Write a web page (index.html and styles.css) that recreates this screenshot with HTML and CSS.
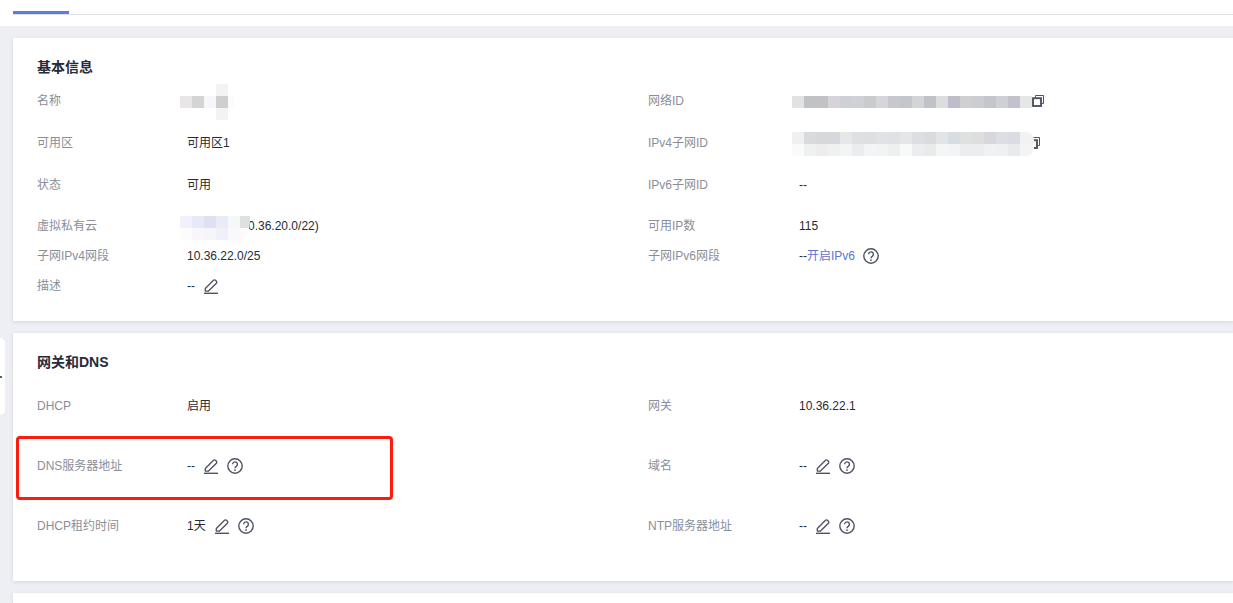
FILE: index.html
```html
<!DOCTYPE html>
<html lang="zh-CN">
<head>
<meta charset="utf-8">
<title>子网详情</title>
<link rel="stylesheet" href="styles.css">
</head>
<body>
<svg class="sprite" aria-hidden="true">
  <symbol id="i-edit" viewBox="0 0 14 15">
    <path d="M1.3 12V9.4L9.5 1.3a1.4 1.4 0 0 1 2 0l.9.9a1.4 1.4 0 0 1 0 2L4.2 12.2z" fill="none" stroke="currentColor" stroke-width="1.35" stroke-linejoin="round"/>
    <path d="M0 14.3h14" stroke="currentColor" stroke-width="1.4"/>
  </symbol>
  <symbol id="i-help" viewBox="0 0 16 16">
    <circle cx="8" cy="8" r="7.2" fill="none" stroke="currentColor" stroke-width="1.4"/>
    <path d="M5.6 6.3a2.4 2.4 0 1 1 3.7 2c-.9.5-1.3 1-1.3 1.9" fill="none" stroke="currentColor" stroke-width="1.4"/>
    <circle cx="8" cy="12.1" r=".9" fill="currentColor"/>
  </symbol>
  <symbol id="i-copy" viewBox="0 0 12 12">
    <path d="M3.5 2.5V.5h8v8H9" fill="none" stroke="currentColor" stroke-width="1"/>
    <rect x="1" y="3.2" width="8" height="7.8" fill="none" stroke="currentColor" stroke-width="1.9"/>
  </symbol>
</svg>

<header class="tabs"><div class="tab-active"></div></header>

<main class="page">
  <section class="card card-basic">
    <h2 class="card-title">基本信息</h2>
    <div class="info first-basic">
      <span class="label">名称</span>
      <div class="value"><span class="mosaic m-name"></span></div>
      <span class="label">网络ID</span>
      <div class="value"><span class="mosaic m-net"></span><svg class="icon-copy"><use href="#i-copy"/></svg></div>
    </div>
    <div class="info gap-lg">
      <span class="label">可用区</span>
      <div class="value">可用区1</div>
      <span class="label">IPv4子网ID</span>
      <div class="value"><span class="mosaic m-subnet"></span><svg class="icon-copy under"><use href="#i-copy"/></svg></div>
    </div>
    <div class="info gap-lg">
      <span class="label">状态</span>
      <div class="value">可用</div>
      <span class="label">IPv6子网ID</span>
      <div class="value">--</div>
    </div>
    <div class="info gap-md">
      <span class="label">虚拟私有云</span>
      <div class="value"><span class="mosaic m-vpc"></span>0.36.20.0/22)</div>
      <span class="label">可用IP数</span>
      <div class="value">115</div>
    </div>
    <div class="info gap-sm">
      <span class="label">子网IPv4网段</span>
      <div class="value">10.36.22.0/25</div>
      <span class="label">子网IPv6网段</span>
      <div class="value">--<a class="link" href="#">开启IPv6</a><svg class="icon-help after-link"><use href="#i-help"/></svg></div>
    </div>
    <div class="info gap-sm">
      <span class="label">描述</span>
      <div class="value">--<svg class="icon-edit"><use href="#i-edit"/></svg></div>
    </div>
  </section>

  <section class="card card-dns">
    <h2 class="card-title">网关和DNS</h2>
    <div class="info first-dns">
      <span class="label">DHCP</span>
      <div class="value">启用</div>
      <span class="label">网关</span>
      <div class="value">10.36.22.1</div>
    </div>
    <div class="info gap-xl">
      <span class="label">DNS服务器地址</span>
      <div class="value">--<svg class="icon-edit"><use href="#i-edit"/></svg><svg class="icon-help"><use href="#i-help"/></svg></div>
      <span class="label">域名</span>
      <div class="value">--<svg class="icon-edit"><use href="#i-edit"/></svg><svg class="icon-help"><use href="#i-help"/></svg></div>
    </div>
    <div class="info gap-xl">
      <span class="label">DHCP租约时间</span>
      <div class="value">1天<svg class="icon-edit"><use href="#i-edit"/></svg><svg class="icon-help"><use href="#i-help"/></svg></div>
      <span class="label">NTP服务器地址</span>
      <div class="value">--<svg class="icon-edit"><use href="#i-edit"/></svg><svg class="icon-help"><use href="#i-help"/></svg></div>
    </div>
    <div class="highlight"></div>
  </section>

  <section class="card card-next"></section>
</main>

<div class="side-handle"><span class="side-tick"></span></div>
</body>
</html>
```

FILE: styles.css
```css
* { box-sizing: border-box; }

html, body {
  margin: 0;
  height: 603px;
  overflow: hidden;
}

body {
  position: relative;
  background: #fff;
  color: #252b3a;
  font: 12px/20px "Liberation Sans", "Noto Sans CJK SC", sans-serif;
}

.sprite { display: none; }

.tabs {
  height: 26px;
  padding-left: 13px;
}

.tabs::before {
  content: "";
  display: block;
  height: 14px;
  border-bottom: 1px solid #dfe1e6;
}

.tab-active {
  width: 56px;
  height: 3px;
  margin-top: -4px;
  background: #5e7ce0;
}

.page {
  display: flex;
  flex-direction: column;
  gap: 12px;
  height: 577px;
  padding: 12px 0 0 13px;
  background: #eeeff4;
  overflow: hidden;
}

.card {
  position: relative;
  flex: none;
  padding: 19px 0 0 24px;
  background: #fff;
  box-shadow: 0 1px 4px rgba(37, 43, 58, .12);
}

.card-basic { height: 283px; }
.card-dns { height: 248px; }
.card-next { height: 40px; }

.card-title {
  margin: 0;
  font-size: 14px;
  line-height: 20px;
  font-weight: 700;
  color: #252b3a;
}

.info {
  display: grid;
  grid-template-columns: 150px 461px 151px 1fr;
  align-items: center;
  height: 20px;
}

.first-basic { margin-top: 14px; }
.first-dns { margin-top: 24px; }
.gap-xl { margin-top: 40px; }
.gap-lg { margin-top: 22px; }
.gap-md { margin-top: 21px; }
.gap-sm { margin-top: 10px; }

.label { color: #8a8e99; }

.value {
  display: flex;
  align-items: center;
  height: 20px;
  color: #252b3a;
}

.link {
  color: #5a75d6;
  text-decoration: none;
}

.icon-edit {
  flex: none;
  width: 14px;
  height: 15px;
  margin-left: 9px;
  color: #4e5363;
}

.icon-help {
  flex: none;
  width: 16px;
  height: 16px;
  margin-left: 9px;
  color: #4e5363;
}

.after-link { margin-left: 8px; }

.icon-copy {
  flex: none;
  width: 12px;
  height: 12px;
  color: #4e5363;
}

.icon-copy.under { margin-left: -6px; }

.mosaic {
  flex: none;
  display: block;
  position: relative;
  z-index: 1;
  background-repeat: no-repeat;
}

.m-name {
  width: 54px;
  height: 36px;
  margin: 2px 0 0 -7px;
  border-radius: 0 0 6px 0;
  background-image:
    linear-gradient(90deg, transparent 0 36px, #f2f3f3 36px 48px, transparent 48px),
    linear-gradient(90deg, #e8e6e6 0 12px, #d4d4d4 12px 24px, #f5f7fb 24px 36px, #cfcfcf 36px 48px, #fafbfd 48px 54px),
    linear-gradient(90deg, transparent 0 36px, #f2f3f3 36px 48px, transparent 48px);
  background-size: 54px 12px;
  background-position: 0 0, 0 12px, 0 24px;
}

.m-net {
  width: 240px;
  height: 12px;
  margin: 2px 0 0 -7px;
  background-image: linear-gradient(90deg,
    #e1e2e2 0 12px, #c1c2c3 12px 24px, #c0c2c5 24px 36px, #d6d4d8 36px 48px,
    #cfd0d5 48px 60px, #d0d1d4 60px 72px, #c9cbcd 72px 84px, #d6d6da 84px 96px,
    #c6c8cd 96px 108px, #c3c6cb 108px 120px, #d3d4d5 120px 132px, #c0c2ca 132px 144px,
    #dcdedd 144px 156px, #bfbdc8 156px 168px, #cfcfd1 168px 180px, #cbcdd2 180px 192px,
    #c5c6cb 192px 204px, #cfd0d4 204px 216px, #c3c1cb 216px 228px, #e6e6e5 228px 240px);
}

.m-subnet {
  width: 242px;
  height: 24px;
  margin: 2px 0 0 -7px;
  border-radius: 0 8px 8px 0;
  background-color: #f5f5f5;
  background-image:
    linear-gradient(90deg,
      #f0f0f2 0 12px, #d9dadc 12px 24px, #d6d8da 24px 36px, #d5d9dd 36px 48px,
      #e6e7e9 48px 60px, #dfe0e2 60px 72px, #dddfe1 72px 84px, #dfe3e6 84px 96px,
      #dfe1e4 96px 108px, #e4e6e8 108px 120px, #dcdee1 120px 132px, #d9dbdf 132px 144px,
      #e3e4e6 144px 156px, #d7dde1 156px 168px, #dee0e2 168px 180px, #dededd 180px 192px,
      #d7d8de 192px 204px, #dcdee2 204px 216px, #d9dce0 216px 228px, #f2f2f3 228px 242px),
    linear-gradient(90deg,
      #fafafa 0 12px, #eff0f0 12px 24px, #ededee 24px 36px, #eff0f1 36px 48px,
      #f3f4f4 48px 60px, #ebeced 60px 72px, #f3f4f5 72px 84px, #f2f3f4 84px 96px,
      #eeefef 96px 108px, #f8f9f9 108px 120px, #ecedef 120px 132px, #e9eaec 132px 144px,
      #f4f5f5 144px 156px, #f3f4f5 156px 168px, #ecedee 168px 180px, #ecedee 180px 192px,
      #f0f1f2 192px 204px, #eff0f1 204px 216px, #e9eaec 216px 228px, #f4f4f4 228px 242px);
  background-size: 242px 12px;
  background-position: 0 0, 0 12px;
}

.m-vpc {
  width: 70px;
  height: 30px;
  margin: 10px -2px 0 -7px;
  border-radius: 0 0 24px 0;
  background-image:
    linear-gradient(90deg, #f0f1fa 0 12px, #e8e9f6 12px 24px, #dfe0f2 24px 36px, #e9ebf6 36px 48px, #f6f7f8 48px 60px, #dde2e1 60px 70px),
    linear-gradient(90deg, #fcfcfd 0 12px, #f6f6fb 12px 24px, #f5f5fb 24px 36px, #eff0f9 36px 48px, #f9f9fb 48px 60px, #fbfbfb 60px 70px),
    linear-gradient(90deg, #fefefe 0 70px, #fcfcfc 70px);
  background-size: 70px 12px, 70px 12px, 70px 6px;
  background-position: 0 0, 0 12px, 0 24px;
}

.highlight {
  position: absolute;
  left: 3px;
  top: 103px;
  width: 377px;
  height: 64px;
  border: 3px solid #fb1b0f;
  border-radius: 4px;
}

.side-handle {
  position: absolute;
  left: 0;
  top: 338px;
  width: 5px;
  height: 77px;
  background: #fff;
  border-radius: 0 6px 6px 0;
}

.side-tick {
  position: absolute;
  left: 0;
  top: 38px;
  width: 2px;
  height: 2px;
  background: #575d6c;
}
```
